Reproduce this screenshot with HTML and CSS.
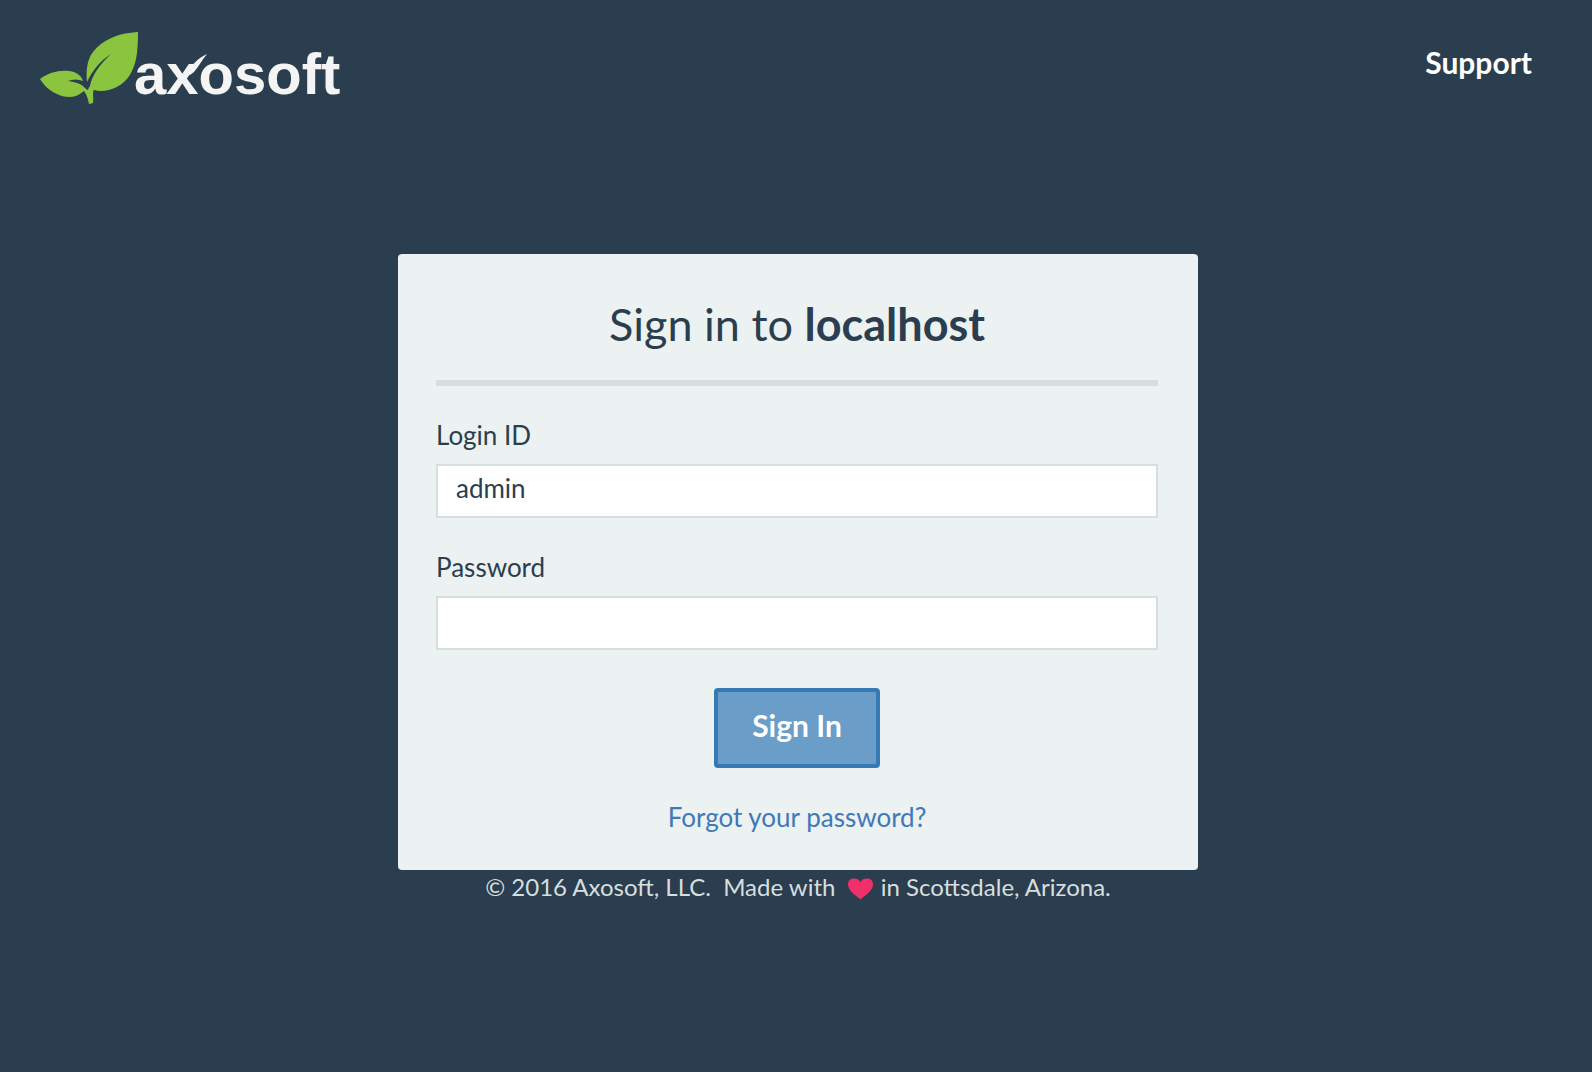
FILE: index.html
```html
<!DOCTYPE html>
<html lang="en">
  <head>
    <meta charset="utf-8" />
    <meta name="viewport" content="width=device-width, initial-scale=1" />
    <title>Sign in - Axosoft</title>
    <link rel="stylesheet" href="styles.css">
  </head>
  <body>
    <header class="header">
      <a class="logo" href="#" aria-label="axosoft">
        <svg class="logo-leaves" width="98" height="72" viewBox="0 0 98 72" aria-hidden="true">
          <path d="M98 0C78 1 62 8 53 20C47 28 46 38 47 50C52 39 60 29 71 22C61 31 54 41 51 50L49 57L54 58C64 61 78 57 87 47C96 36 98 22 98 0Z" />
          <path d="M0 47C10 39 24 37 34 40C39 42 42 45 43 49C38 47 33 47 28 49C34 50 39 51 43 54C45 56 47 58 48 58L49 55L54 57C52 62 54 65 53 71L49 72C48 67 47 63 44 59C35 67 25 66 17 62C8 58 4 53 0 47Z" />
        </svg>
        <span class="logo-name">axosoft</span>
        <svg class="logo-swoosh" width="24" height="24" viewBox="0 0 24 24" aria-hidden="true">
          <path d="M3 18C8 11 14 4 23 0C18 6 15 12 10 18L6 21Z" />
        </svg>
      </a>
      <a class="support-link" href="#">Support</a>
    </header>
    <main class="main-layout">
      <form class="login-card">
        <h1>Sign in to <strong>localhost</strong></h1>
        <label for="login-id">Login ID</label>
        <input id="login-id" type="text" value="admin" />
        <label for="password">Password</label>
        <input id="password" type="password" />
        <button type="submit">Sign In</button>
        <a class="forgot-link" href="#">Forgot your password?</a>
      </form>
      <footer class="footer">
        &copy; 2016 Axosoft, LLC.&nbsp; Made with
        <svg class="heart" width="25" height="22" viewBox="0 0 26 22" role="img" aria-label="love">
          <path d="M13 22C8 17 0 13 0 6C0 2 3 0 6 0C9 0 12 1 13 4C14 1 17 0 20 0C23 0 26 2 26 6C26 13 18 17 13 22Z" />
        </svg>
        in Scottsdale, Arizona.
      </footer>
    </main>
  </body>
</html>
```
FILE: styles.css
```css
* {
  box-sizing: border-box;
}
body {
  margin: 0;
  background: #2b3e4f;
  color: #2b3e4f;
  font-family: Lato, sans-serif;
  font-size: 26px;
}
a {
  text-decoration: none;
}
.header {
  display: flex;
  justify-content: space-between;
  align-items: flex-start;
  padding: 32px 60px 0 40px;
}
.logo {
  position: relative;
  display: flex;
  height: 72px;
  color: #f4f4f4;
}
.logo-leaves {
  fill: #8bc540;
}
.logo-name {
  margin: 10px 0 0 -4px;
  font: bold 58px/64px "Liberation Sans", Arial, sans-serif;
}
/* long upper arm of the x */
.logo-swoosh {
  position: absolute;
  left: 144px;
  top: 22px;
  fill: #f4f4f4;
}
.support-link {
  margin-top: 12px;
  color: #fff;
  font-size: 30px;
  line-height: 36px;
  font-weight: bold;
}
.main-layout {
  display: flex;
  flex-direction: column;
  align-items: center;
  padding: 150px 0 40px 4px;
}
.login-card {
  display: flex;
  flex-direction: column;
  width: 100%;
  max-width: 800px;
  padding: 40px 40px 36px 38px;
  border-radius: 4px;
  background: #ecf1f1;
}
h1 {
  margin: 0 0 32px;
  padding-bottom: 26px;
  border-bottom: 6px solid #d5dfdd;
  font-size: 45px;
  line-height: 60px;
  font-weight: normal;
  text-align: center;
}
h1 strong {
  font-weight: bold;
}
label {
  margin-bottom: 12px;
  font-size: 26px;
  line-height: 34px;
}
input {
  width: 100%;
  height: 54px;
  margin-bottom: 32px;
  padding: 0 18px 6px;
  border: 2px solid #d5dfdd;
  background: #fff;
  color: #2b3e4f;
  font: 26px Lato, sans-serif;
}
button {
  align-self: center;
  height: 80px;
  margin: 6px 0 32px;
  padding: 0 34px 6px;
  border: 4px solid #367ab5;
  border-radius: 4px;
  background: #6a9dc7;
  color: #fff;
  font: bold 30px Lato, sans-serif;
  cursor: pointer;
}
.forgot-link {
  align-self: center;
  color: #4178b8;
  line-height: 34px;
}
.footer {
  color: #d6dfde;
  font-size: 24px;
  line-height: 34px;
}
.heart {
  margin: 0 2px -4px 6px;
  fill: #f0306a;
}
```
